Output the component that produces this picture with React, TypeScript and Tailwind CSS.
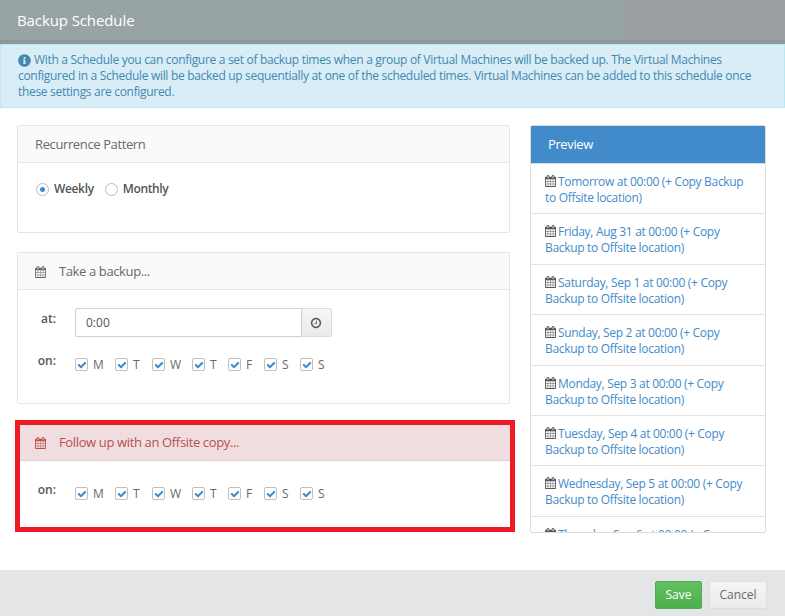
import React, { useState } from "react";
import { FaInfoCircle } from "react-icons/fa";

interface Day {
  label: string;
  width: string;
}

const days: Day[] = [
  { label: "M", width: "w-10" },
  { label: "T", width: "w-[37px]" },
  { label: "W", width: "w-10" },
  { label: "T", width: "w-9" },
  { label: "F", width: "w-9" },
  { label: "S", width: "w-9" },
  { label: "S", width: "w-9" },
];

const previewItems = [
  "Tomorrow",
  "Friday, Aug 31",
  "Saturday, Sep 1",
  "Sunday, Sep 2",
  "Monday, Sep 3",
  "Tuesday, Sep 4",
  "Wednesday, Sep 5",
  "Thursday, Sep 6",
];

const CalendarIcon = ({ className }: { className?: string }) => (
  <svg viewBox="0 0 1664 1792" fill="currentColor" className={className}>
    <path d="M128 1664h288v-288h-288v288zm352 0h320v-288h-320v288zm-352-352h288v-320h-288v320zm352 0h320v-320h-320v320zm-352-384h288v-288h-288v288zm736 736h320v-288h-320v288zm-384-736h320v-288h-320v288zm768 736h288v-288h-288v288zm-384-352h320v-320h-320v320zm-352-864v-288q0-13-9.5-22.5t-22.5-9.5h-64q-13 0-22.5 9.5t-9.5 22.5v288q0 13 9.5 22.5t22.5 9.5h64q13 0 22.5-9.5t9.5-22.5zm736 864h288v-320h-288v320zm-384-384h320v-288h-320v288zm384 0h288v-288h-288v288zm32-480v-288q0-13-9.5-22.5t-22.5-9.5h-64q-13 0-22.5 9.5t-9.5 22.5v288q0 13 9.5 22.5t22.5 9.5h64q13 0 22.5-9.5t9.5-22.5zm384-64v1280q0 52-38 90t-90 38h-1408q-52 0-90-38t-38-90v-1280q0-52 38-90t90-38h128v-96q0-66 47-113t113-47h64q66 0 113 47t47 113v96h384v-96q0-66 47-113t113-47h64q66 0 113 47t47 113v96h128q52 0 90 38t38 90z" />
  </svg>
);

const ClockIcon = () => (
  <svg viewBox="0 0 1792 1792" fill="currentColor" className="size-3">
    <path d="M1024 544v448q0 14-9 23t-23 9h-320q-14 0-23-9t-9-23v-64q0-14 9-23t23-9h224v-352q0-14 9-23t23-9h64q14 0 23 9t9 23zm416 352q0-148-73-273t-198-198-273-73-273 73-198 198-73 273 73 273 198 198 273 73 273-73 198-198 73-273zm224 0q0 209-103 385.5t-279.5 279.5-385.5 103-385.5-103-279.5-279.5-103-385.5 103-385.5 279.5-279.5 385.5-103 385.5 103 279.5 279.5 103 385.5z" />
  </svg>
);

const CheckIcon = () => (
  <svg viewBox="0 0 1792 1792" fill="currentColor" className="size-2.5 text-[#428bca]">
    <path d="M1671 566q0 40-28 68l-724 724-136 136q-28 28-68 28t-68-28l-136-136-362-362q-28-28-28-68t28-68l136-136q28-28 68-28t68 28l294 295 656-657q28-28 68-28t68 28l136 136q28 28 28 68z" />
  </svg>
);

const DayPicker = () => {
  const [checked, setChecked] = useState<boolean[]>(days.map(() => true));

  const toggle = (index: number) => {
    setChecked((prev) => prev.map((v, i) => (i === index ? !v : v)));
  };

  return (
    <div className="flex">
      {days.map((day, i) => (
        <button
          key={i}
          type="button"
          onClick={() => toggle(i)}
          className={`flex h-[13px] shrink-0 items-center gap-[5px] leading-[13px] ${day.width}`}
        >
          <span className="flex size-[13px] shrink-0 items-center justify-center rounded-[2px] border border-[#bfbfbf] bg-white">
            {checked[i] && <CheckIcon />}
          </span>
          <span>{day.label}</span>
        </button>
      ))}
    </div>
  );
};

const App: React.FC = () => {
  const [pattern, setPattern] = useState("Weekly");
  const [time, setTime] = useState("0:00");

  return (
    <div className="flex h-[616px] w-[785px] flex-col overflow-hidden bg-white font-['Open_Sans',sans-serif] text-xs text-[#676a6c]">
      {/* HEADER */}
      <div className="h-11 shrink-0 border-b-4 border-[#8d9898] bg-[linear-gradient(to_right,#98a4a3_623px,#9b9ea3_623px)] pl-[17px] text-[15px] leading-10 tracking-[-0.1px] text-white">
        Backup Schedule
      </div>

      {/* INFO */}
      <div className="h-16 shrink-0 border border-[#bce8f1] bg-[#d9edf7] pt-[7px] pl-[17px] leading-4 tracking-[-0.31px] text-[#4189b0]">
        <div className="w-[740px]">
          <FaInfoCircle className="mr-[3px] inline size-[13px] align-[-3px]" />
          With a Schedule you can configure a set of backup times when a group of Virtual Machines will be backed up. The Virtual Machines
          configured in a Schedule will be backed up sequentially at one of the scheduled times. Virtual Machines can be added to this schedule once
          these settings are configured.
        </div>
      </div>

      <div className="flex h-[462px] shrink-0">
        <div className="flex w-[515px] shrink-0 flex-col pl-[15px]">
          {/* RECURRENCE */}
          <section className="mt-[17px] mr-[5px] ml-0.5 h-[108px] rounded-[2px] border border-[#e5e5e5]">
            <h2 className="h-[37px] border-b border-[#e5e5e5] bg-[#fafafa] pl-[17px] text-[13px] leading-[37px] tracking-[-0.38px]">
              Recurrence Pattern
            </h2>
            <div className="flex pt-[18px] pl-[18px] font-semibold tracking-[-0.35px] text-[#555]">
              {["Weekly", "Monthly"].map((name) => (
                <label key={name} className="mr-[11px] flex items-center gap-[5px]">
                  <input
                    type="radio"
                    name="pattern"
                    className="peer sr-only"
                    checked={pattern === name}
                    onChange={() => setPattern(name)}
                  />
                  <span className="flex size-[13px] items-center justify-center rounded-full border border-[#bbb]">
                    {pattern === name && <span className="size-[5px] rounded-full bg-[#428bca]" />}
                  </span>
                  {name}
                </label>
              ))}
            </div>
          </section>

          {/* BACKUP */}
          <section className="mt-[19px] mr-[5px] ml-0.5 h-[152px] rounded-[2px] border border-[#e5e5e5]">
            <h2 className="flex h-[37px] items-center gap-[13px] border-b border-[#e5e5e5] bg-[#fafafa] pt-0.5 pl-[17px] text-[13px] tracking-[-0.38px]">
              <CalendarIcon className="h-3 w-[11px]" />
              Take a backup...
            </h2>
            <div className="flex pt-[18px]">
              <div className="w-[57px] pt-[3px] pr-[19px] text-right font-semibold text-[#555]">at:</div>
              <div className="flex h-[29px] w-[257px]">
                <input
                  value={time}
                  onChange={(e) => setTime(e.target.value)}
                  className="w-[227px] rounded-l-[2px] border border-[#d0d0d0] pl-2.5 text-[#555] outline-none"
                />
                <button className="flex flex-1 items-center justify-center rounded-r-[2px] border border-l-0 border-[#ddd] bg-linear-to-b from-[#f5f5f5] to-[#eaeaea] pr-px text-[#555]">
                  <ClockIcon />
                </button>
              </div>
            </div>
            <div className="flex pt-4">
              <div className="w-[57px] pr-[19px] text-right font-semibold text-[#555]">on:</div>
              <div className="pt-[5px]">
                <DayPicker />
              </div>
            </div>
          </section>

          {/* OFFSITE COPY */}
          <section className="mt-4 h-[112px] border-5 border-[#ed1c24]">
            <h2 className="flex h-9 items-center gap-[13px] border-b border-[#ebccd1] bg-[#f0dddf] pl-[15px] text-[13px] tracking-[-0.36px] text-[#b9504e]">
              <CalendarIcon className="h-3 w-[11px]" />
              Follow up with an Offsite copy...
            </h2>
            <div className="flex pt-[21px]">
              <div className="w-[55px] pr-[19px] text-right font-semibold text-[#555]">on:</div>
              <div className="pt-[5px]">
                <DayPicker />
              </div>
            </div>
          </section>
        </div>

        {/* PREVIEW */}
        <aside className="mt-[17px] ml-[15px] flex h-[408px] w-[236px] flex-col overflow-hidden rounded-[2px] border border-[#ddd]">
          <h2 className="h-[37px] shrink-0 bg-[#428bca] pl-[17px] text-[13px] leading-[37px] tracking-[-0.38px] text-white">Preview</h2>
          <ul className="min-h-0 flex-1 overflow-hidden border-t border-[#ddd]">
            {previewItems.map((item) => (
              <li key={item} className="h-[50.4px] border-b border-[#e3e3e3] pt-2.5 pr-2 pl-3.5 leading-4 tracking-[-0.31px] text-[#428bca]">
                <CalendarIcon className="mr-0.5 inline h-3 w-[11px] align-[-1px] text-[#555]" />
                {`${item} at 00:00 (+ Copy Backup to Offsite location)`}
              </li>
            ))}
          </ul>
        </aside>
      </div>

      {/* FOOTER */}
      <div className="flex flex-1 justify-end gap-[7px] bg-[#e4e5e7] pt-[11px] pr-[18px]">
        <button className="h-7 w-[47px] rounded-[2px] border border-[#4cae4c] bg-linear-to-b from-[#62c060] to-[#4cb04b] text-white">
          Save
        </button>
        <button className="h-7 w-[58px] rounded-[2px] border border-[#ddd] bg-linear-to-b from-[#f5f5f5] to-[#ebebeb] text-[#676a6c]">
          Cancel
        </button>
      </div>
    </div>
  );
};

export default App;
